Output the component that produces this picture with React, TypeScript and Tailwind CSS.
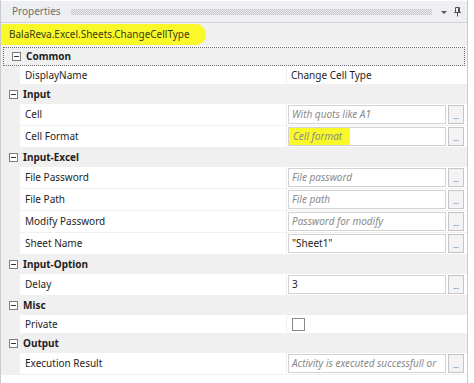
type Row =
  | { kind: 'cat'; label: string; focus?: boolean }
  | {
      kind: 'prop'
      name: string
      text?: string
      box?: string
      italic?: boolean
      mark?: boolean
      check?: boolean
    }

const rows: Row[] = [
  { kind: 'cat', label: 'Common', focus: true },
  { kind: 'prop', name: 'DisplayName', text: 'Change Cell Type' },
  { kind: 'cat', label: 'Input' },
  { kind: 'prop', name: 'Cell', box: 'With quots like A1', italic: true },
  { kind: 'prop', name: 'Cell Format', box: 'Cell format', italic: true, mark: true },
  { kind: 'cat', label: 'Input-Excel' },
  { kind: 'prop', name: 'File Password', box: 'File password', italic: true },
  { kind: 'prop', name: 'File Path', box: 'File path', italic: true },
  { kind: 'prop', name: 'Modify Password', box: 'Password for modify', italic: true },
  { kind: 'prop', name: 'Sheet Name', box: '"Sheet1"' },
  { kind: 'cat', label: 'Input-Option' },
  { kind: 'prop', name: 'Delay', box: '3' },
  { kind: 'cat', label: 'Misc' },
  { kind: 'prop', name: 'Private', check: true },
  { kind: 'cat', label: 'Output' },
  { kind: 'prop', name: 'Execution Result', box: 'Activity is executed successfull or', italic: true },
]

function MinusBox() {
  return (
    <div className="w-[9px] h-[9px] border border-[#7d7d7d] bg-white flex items-center justify-center shrink-0">
      <div className="w-[5px] h-px bg-[#333]" />
    </div>
  )
}

function Category({ label, focus }: { label: string; focus?: boolean }) {
  return (
    <div
      className={`h-[19px] flex items-center pl-[8px] bg-[#f0f0f0] ${
        focus ? 'border border-dotted border-[#6e6e6e] mx-[2px] pl-[6px]' : ''
      }`}
    >
      <MinusBox />
      <span className="ml-[5px] font-bold text-[#1e1e1e]">{label}</span>
    </div>
  )
}

function Ellipsis() {
  return (
    <div className="w-[16px] h-[19px] shrink-0 border border-[#c6c6c6] bg-[#f3f3f3] flex items-end justify-center pb-[3px] text-[7px] leading-none text-[#666]">
      ...
    </div>
  )
}

function Property({ row }: { row: Extract<Row, { kind: 'prop' }> }) {
  const tall = !!row.box
  return (
    <div className={`flex ${tall ? 'h-[22px]' : 'h-[19px]'} bg-[#f0f0f0]`}>
      <div className="w-[19px] shrink-0" />
      <div className="flex-1 bg-white mb-px flex items-center pl-[5px] text-[#1e1e1e]">{row.name}</div>
      <div className="w-[180px] ml-px bg-white mb-px flex items-center">
        {row.text && <span className="pl-[4px] text-[#1e1e1e]">{row.text}</span>}
        {row.check && <div className="ml-[5px] w-[13px] h-[13px] border border-[#8a8a8a] bg-white" />}
        {row.box && (
          <div className="flex items-center w-full pl-px pr-[3px] gap-[2px]">
            <div className="flex-1 min-w-0 h-[19px] border border-[#d2d2d2] bg-white flex items-center pl-[3px] overflow-hidden whitespace-nowrap">
              <span
                className={`${row.italic ? 'italic text-[#8a8a8a]' : 'text-[#1e1e1e]'} ${
                  row.mark ? 'bg-[#f9f92a] text-[#6b6b2a] pl-[4px] pr-[8px] -ml-[3px] rounded-r-[6px] py-[4px]' : ''
                }`}
              >
                {row.box}
              </span>
            </div>
            <Ellipsis />
          </div>
        )}
      </div>
    </div>
  )
}

export default function App() {
  return (
    <div className="w-[474px] h-[383px] bg-white overflow-hidden font-['Noto_Sans','Open_Sans',sans-serif] text-[10px]">
      <div className="w-[468px] h-full border-l border-r border-[#cbcbcb] flex flex-col bg-white">
        {/* Title bar */}
        <div className="h-[22px] mt-[1px] shrink-0 flex items-center bg-[#eeeff2] border-b border-[#d4d4d4] pl-[11px] pr-[6px]">
          <span className="text-[#6f6f6f]">Properties</span>
          <div className="flex-1 h-[6px] ml-[10px] mr-[8px] bg-[conic-gradient(#c4c4c4_25%,transparent_0_50%,#c4c4c4_0_75%,transparent_0)] bg-[length:2px_2px]" />
          <svg width="8" height="6" viewBox="0 0 8 6" className="mr-[6px]">
            <path d="M1 2h6L4 5z" fill="#555" />
          </svg>
          <svg width="7" height="10" viewBox="0 0 7 10">
            <path d="M1.5 0.5h4v5h-4z M0 5.5h7 M3.5 5.5v4" fill="none" stroke="#555" strokeWidth="1" />
            <path d="M4.5 1v4" stroke="#555" strokeWidth="1" />
          </svg>
        </div>

        {/* Description */}
        <div className="h-[23px] shrink-0 bg-[#f0f0f0] flex items-center">
          <span className="bg-[#f9f92a] text-[#3c3c10] h-[21px] flex items-center pl-[8px] pr-[16px] rounded-r-[10px] rounded-tl-[3px]">
            BalaReva.Excel.Sheets.ChangeCellType
          </span>
        </div>

        {/* Grid */}
        <div className="flex-1 bg-white pt-[1px]">
          <div className="bg-[#f0f0f0]">
            {rows.map((r, i) =>
              r.kind === 'cat' ? (
                <Category key={i} label={r.label} focus={r.focus} />
              ) : (
                <Property key={i} row={r} />
              ),
            )}
          </div>
        </div>
      </div>
    </div>
  )
}
